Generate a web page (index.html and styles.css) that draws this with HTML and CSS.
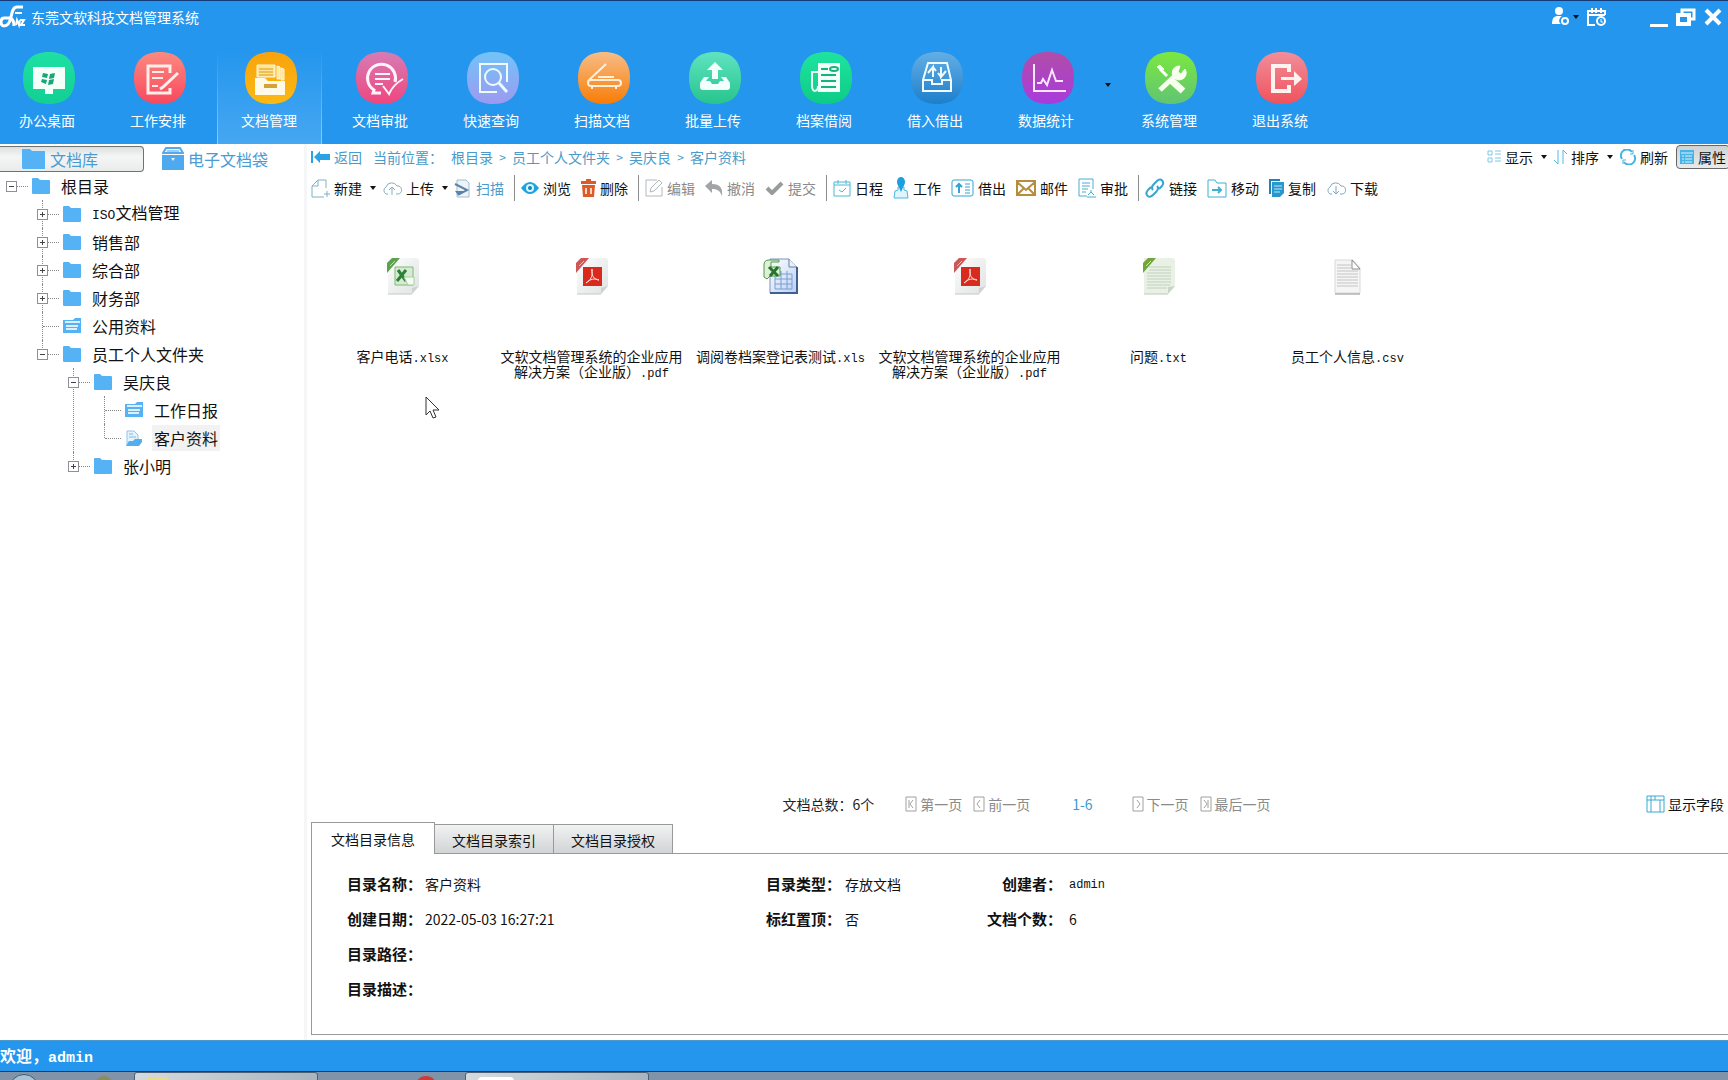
FILE: index.html
```html
<!DOCTYPE html>
<html lang="zh-CN">
<head>
<meta charset="utf-8">
<title>东莞文软科技文档管理系统</title>
<link rel="stylesheet" href="styles.css">
</head>
<body>
<svg class="defs" width="0" height="0" aria-hidden="true">
  <defs>
    <linearGradient id="g-desk" x2="0" y2="1"><stop stop-color="#1fe0a4"/><stop offset="1" stop-color="#12cf93"/></linearGradient>
    <linearGradient id="g-work" x2="0" y2="1"><stop stop-color="#fc8a80"/><stop offset="1" stop-color="#f8485e"/></linearGradient>
    <linearGradient id="g-doc" x2="0" y2="1"><stop stop-color="#f8a30c"/><stop offset="1" stop-color="#fcb813"/></linearGradient>
    <linearGradient id="g-review" x2="0" y2="1"><stop stop-color="#d67cb4"/><stop offset="1" stop-color="#f0457f"/></linearGradient>
    <linearGradient id="g-search" x2="0" y2="1"><stop stop-color="#72c3f8"/><stop offset="1" stop-color="#9c9af0"/></linearGradient>
    <linearGradient id="g-scan" x2="0" y2="1"><stop stop-color="#f7bd86"/><stop offset="1" stop-color="#f87c06"/></linearGradient>
    <linearGradient id="g-upload" x2="0" y2="1"><stop stop-color="#5fe3c0"/><stop offset="1" stop-color="#27c48d"/></linearGradient>
    <linearGradient id="g-read" x2="0" y2="1"><stop stop-color="#1ee4a0"/><stop offset="1" stop-color="#0dcb85"/></linearGradient>
    <linearGradient id="g-lend" x2="0" y2="1"><stop stop-color="#63aee6"/><stop offset="1" stop-color="#1d7fcb"/></linearGradient>
    <linearGradient id="g-stat" x2="0" y2="1"><stop stop-color="#b04da8"/><stop offset="1" stop-color="#a93bdd"/></linearGradient>
    <linearGradient id="g-sys" x2="0" y2="1"><stop stop-color="#7be83f"/><stop offset="1" stop-color="#60c474"/></linearGradient>
    <linearGradient id="g-exit" x2="0" y2="1"><stop stop-color="#f08f9a"/><stop offset="1" stop-color="#f0525c"/></linearGradient>
    <linearGradient id="g-page" x2="1" y2="1"><stop stop-color="#fdfdfd"/><stop offset="1" stop-color="#dfe3e2"/></linearGradient>
    <linearGradient id="g-sheet" x2="1" y2="1"><stop stop-color="#fff"/><stop offset="1" stop-color="#b8d0f4"/></linearGradient>
  </defs>
  <symbol id="tile" viewBox="0 0 52 52"><path d="M26 0C43 0 52 9 52 26S43 52 26 52 0 43 0 26 9 0 26 0Z"/></symbol>
  <symbol id="folder" viewBox="0 0 19 18"><path d="M0 2a1 1 0 0 1 1-1h5l2 2h9a1 1 0 0 1 1 1v12a1 1 0 0 1-1 1H1a1 1 0 0 1-1-1z" fill="#55b2f5"/></symbol>
  <symbol id="folder-doc" viewBox="0 0 19 18"><path d="M0 3h10l2-2h6v15H0z" fill="#55b2f5"/><path d="M2 5h15M3 9h12M3 12h11" stroke="#d8f0ff" stroke-width="2"/></symbol>
  <symbol id="folder-open" viewBox="0 0 19 18"><path d="M2 16V2h7l4 4v5" fill="#e4f3fc" stroke="#8cc5e8"/><path d="M4 5h4M4 8h7" stroke="#7dbde6"/><path d="M1 17l3-5h4l2-2h7v3l-3 4z" fill="#52aeec"/></symbol>
  <symbol id="pdf" viewBox="0 0 36 38"><path d="M3 1h28a3 3 0 0 1 3 3v25l-7 8H3z" fill="url(#g-page)"/><path d="M27 37v-6l7-2z" fill="#cfd2d2"/><path d="M3 37h24" stroke="#c4c8c8"/><path d="M2 11V6l5-5h8L2 16z" fill="#cf5656"/><path d="M5 9l5-5" stroke="#f5b8b8"/><path d="M9 10h19v19H9z" fill="#d92a20"/><path d="M18 12c1 7-1 11-6 14 4-4 9-5 13-3-5 0-8-5-7-11" fill="none" stroke="#fbe0d8"/></symbol>
</svg>

<header class="app-header">
  <div class="titlebar">
    <svg class="logo" width="26" height="24" viewBox="0 0 26 24" fill="none" stroke="#fff" stroke-width="2"><path d="M23 2h-6c-4 0-5 5-6 10s-3 9-7 9-4-8 0-8h5c5 0 5 5 5 8" stroke-width="3"/><path d="M15 8h7M16 20l1-5 2 5 1-5M20 15h4l-3 5h4" stroke-width="2"/></svg>
    <h1>东莞文软科技文档管理系统</h1>
    <div class="window-tools">
      <button class="win user" aria-label="用户设置"><svg width="18" height="20" viewBox="0 0 18 20"><circle cx="7" cy="4" r="4" fill="#fff"/><path d="M0 17c0-6 2-8 6-8h4c-3 2-4 6-1 8z" fill="#fff"/><circle cx="13" cy="14" r="3" fill="none" stroke="#fff" stroke-width="2"/></svg><i class="caret"></i></button>
      <button class="win cal" aria-label="日程"><svg width="19" height="20" viewBox="0 0 19 20" fill="none" stroke="#fff" stroke-width="2"><path d="M8 18H1V4h17v4M1 8h17M5 1v5M9 1v5M14 1v5"/><circle cx="14" cy="14" r="4"/><path d="M14 12v3h2" stroke-width="1"/></svg></button>
      <button class="win" aria-label="最小化"><svg width="18" height="20" viewBox="0 0 18 20"><path d="M0 17h18v3H0z" fill="#fff"/></svg></button>
      <button class="win" aria-label="还原"><svg width="20" height="20" viewBox="0 0 20 20" fill="none" stroke="#fff"><path d="M6 6V3h12v9h-3" stroke-width="3"/><path d="M2 8h11v9H2z" stroke-width="4"/></svg></button>
      <button class="win" aria-label="关闭"><svg width="18" height="20" viewBox="0 0 18 20"><path d="M2 3l14 14M16 3L2 17" stroke="#fff" stroke-width="4"/></svg></button>
    </div>
  </div>
  <nav class="modules">
    <a href="#desk"><svg viewBox="0 0 52 52"><use href="#tile" fill="url(#g-desk)"/><path d="M10 15h32v22H30v5h-8v-5H10z" fill="#f4fffa"/><path d="M20 21l5 1-1 4-5-1zM27 22l5-1-1 5-5 1zM19 27l5 1-1 4-5-2zM26 28l5-1-1 5-5 1z" fill="#17a777"/></svg><span>办公桌面</span></a>
    <a href="#work"><svg viewBox="0 0 52 52"><use href="#tile" fill="url(#g-work)"/><g fill="none" stroke="#ffeeea" stroke-width="3"><path d="M36 21v-7H14v27h22v-5"/><path d="M18 20h12M18 26h11M18 34h6" stroke-width="2"/><path d="M44 21L29 35l-3 2" /></g></svg><span>工作安排</span></a>
    <a href="#docs" class="active" aria-current="page"><svg viewBox="0 0 52 52"><use href="#tile" fill="url(#g-doc)"/><path d="M12 13h18v12H12zM32 14l3 1v12h-3zM36 16l3 1v11h-3z" fill="#ffe59a" stroke="#fff6d6"/><path d="M14 17h14M14 20h14M14 23h14" stroke="#d99a10"/><path d="M10 26h10l3 3h17v14H10z" fill="#fff9e8"/><path d="M19 32h13v4H19z" fill="#d3a23a"/></svg><span>文档管理</span></a>
    <a href="#review"><svg viewBox="0 0 52 52"><use href="#tile" fill="url(#g-review)"/><g fill="none" stroke="#fff2f8" stroke-width="3"><path d="M25 41H17l1-3A14 14 0 1 1 39 30"/><path d="M19 22h15M19 27h15M19 32h8" stroke-width="2"/><path d="M27 34l6 8c3-7 7-11 14-15" stroke-width="2"/></g></svg><span>文档审批</span></a>
    <a href="#search"><svg viewBox="0 0 52 52"><use href="#tile" fill="url(#g-search)"/><g fill="none" stroke="#effaff" stroke-width="2"><path d="M30 40H13V12h27v18"/><circle cx="26" cy="25" r="8"/><path d="M32 31l8 9" stroke-width="3"/></g></svg><span>快速查询</span></a>
    <a href="#scan"><svg viewBox="0 0 52 52"><use href="#tile" fill="url(#g-scan)"/><g fill="none" stroke="#ffeeda" stroke-width="2"><path d="M28 12L10 29"/><rect x="10" y="28" width="33" height="6" rx="3"/><path d="M20 25h16M14 34v3M38 34v3"/></g></svg><span>扫描文档</span></a>
    <a href="#upload"><svg viewBox="0 0 52 52"><use href="#tile" fill="url(#g-upload)"/><path d="M26 10l8 8h-5v9h-6v-9h-5z" fill="#f2fffb"/><path d="M15 25h5l-3 4h4l2 3h6l2-3h4l-3-4h5l4 6v4a3 3 0 0 1-3 3H14a3 3 0 0 1-3-3v-4z" fill="#f2fffb"/></svg><span>批量上传</span></a>
    <a href="#read"><svg viewBox="0 0 52 52"><use href="#tile" fill="url(#g-read)"/><path d="M18 11h22v29H18z" fill="#f3fffa"/><path d="M18 20h-6v14c0 7 6 6 6 0" fill="none" stroke="#e8fff6" stroke-width="2"/><path d="M21 17h7M21 23h15M21 29h15M21 35h15" stroke="#16b47c" stroke-width="2"/><ellipse cx="34" cy="17" rx="4" ry="2" fill="none" stroke="#16b47c" stroke-width="2"/></svg><span>档案借阅</span></a>
    <a href="#lend"><svg viewBox="0 0 52 52"><use href="#tile" fill="url(#g-lend)"/><g fill="none" stroke="#f0fbff" stroke-width="2"><path d="M17 11h19l4 17v11H12V28z"/><path d="M12 28h9v4h10v-4h9M22 25V15l-5 6M22 15l3 4M30 15v10l5-6M30 25l-3-4"/></g></svg><span>借入借出</span></a>
    <a href="#stat"><svg viewBox="0 0 52 52"><use href="#tile" fill="url(#g-stat)"/><g fill="none" stroke="#fbe6ff" stroke-width="2"><path d="M12 12v27h32"/><path d="M15 31h4l2-4 4 6 5-15 4 11h7"/></g></svg><span>数据统计</span></a>
    <button class="more" aria-label="更多"><i class="caret"></i></button>
    <a href="#sys"><svg viewBox="0 0 52 52"><use href="#tile" fill="url(#g-sys)"/><g stroke="#f7ffee" fill="none"><path d="M15 17l7 7" stroke-width="3"/><path d="M27 29l11 10" stroke-width="7"/><path d="M15 38l17-16" stroke-width="5"/><path d="M40 17a7 7 0 1 1-5-3l-2 6 3 2z" fill="#f7ffee"/><path d="M12 15l3-2 4 4-2 2z" fill="#f7ffee"/></g></svg><span>系统管理</span></a>
    <a href="#exit"><svg viewBox="0 0 52 52"><use href="#tile" fill="url(#g-exit)"/><path d="M33 20v-6H17v25h16v-6" fill="none" stroke="#fff3f0" stroke-width="4"/><path d="M25 25h13v-6l8 8-8 7v-6H25z" fill="#fff3f0"/></svg><span>退出系统</span></a>
  </nav>
</header>

<div class="workspace">
  <aside class="sidebar">
    <div class="lib-tabs">
      <button class="lib-tab current"><svg width="24" height="22" viewBox="0 0 24 22"><path d="M0 1h8l2 2h13v18H1L0 20z" fill="#55b2f5"/></svg>文档库</button>
      <button class="lib-tab"><svg width="22" height="24" viewBox="0 0 22 24"><path d="M4 1h14l3 5H1z" fill="#e3f4ff" stroke="#55a8ec" stroke-width="2"/><path d="M5 4h12" stroke="#55a8ec"/><path d="M0 8h22v15H0z" fill="#4fa9ee"/><path d="M9 11h4l-2 3z" fill="#e3f4ff"/></svg>电子文档袋</button>
    </div>
    <ul class="tree root">
      <li><div class="row"><button class="exp" aria-label="收起"></button><i class="dash"></i><svg class="ti"><use href="#folder"/></svg><a href="#n0">根目录</a></div>
        <ul class="tree">
          <li><div class="row"><button class="exp plus" aria-label="展开"></button><i class="dash"></i><svg class="ti"><use href="#folder"/></svg><a href="#n1"><span class="mono">ISO</span>文档管理</a></div></li>
          <li><div class="row"><button class="exp plus" aria-label="展开"></button><i class="dash"></i><svg class="ti"><use href="#folder"/></svg><a href="#n2">销售部</a></div></li>
          <li><div class="row"><button class="exp plus" aria-label="展开"></button><i class="dash"></i><svg class="ti"><use href="#folder"/></svg><a href="#n3">综合部</a></div></li>
          <li><div class="row"><button class="exp plus" aria-label="展开"></button><i class="dash"></i><svg class="ti"><use href="#folder"/></svg><a href="#n4">财务部</a></div></li>
          <li><div class="row leaf"><i class="dash"></i><svg class="ti"><use href="#folder-doc"/></svg><a href="#n5">公用资料</a></div></li>
          <li><div class="row"><button class="exp" aria-label="收起"></button><i class="dash"></i><svg class="ti"><use href="#folder"/></svg><a href="#n6">员工个人文件夹</a></div>
            <ul class="tree">
              <li><div class="row"><button class="exp" aria-label="收起"></button><i class="dash"></i><svg class="ti"><use href="#folder"/></svg><a href="#n7">吴庆良</a></div>
                <ul class="tree">
                  <li><div class="row leaf"><i class="dash"></i><svg class="ti"><use href="#folder-doc"/></svg><a href="#n8">工作日报</a></div></li>
                  <li><div class="row leaf"><i class="dash"></i><svg class="ti"><use href="#folder-open"/></svg><a href="#n9" class="selected">客户资料</a></div></li>
                </ul>
              </li>
              <li><div class="row"><button class="exp plus" aria-label="展开"></button><i class="dash"></i><svg class="ti"><use href="#folder"/></svg><a href="#n10">张小明</a></div></li>
            </ul>
          </li>
        </ul>
      </li>
    </ul>
  </aside>

  <main class="content">
    <div class="pathbar">
      <nav class="crumbs">
        <a href="#back" class="back"><svg width="20" height="14" viewBox="0 0 20 14" fill="#2aa3e4"><path d="M0 1h2v12H0zM3 7l6-6v3h10v6H9v3z"/></svg>返回</a>
        <span class="where">当前位置：</span>
        <a href="#c0">根目录</a><i>&gt;</i><a href="#c1">员工个人文件夹</a><i>&gt;</i><a href="#c2">吴庆良</a><i>&gt;</i><a href="#c3">客户资料</a>
      </nav>
      <div class="view-tools">
        <button class="tool"><svg width="14" height="14" viewBox="0 0 14 14" fill="none" stroke="#7cc9e4"><path d="M1 1h4v4H1zM1 8h4v4H1zM8 1h6M8 4h6M8 8h6M8 11h6"/></svg>显示<i class="caret"></i></button>
        <button class="tool"><svg width="13" height="16" viewBox="0 0 13 16" fill="none" stroke="#58b8e0"><path d="M4 1v14L0 11M9 15V1l4 4"/></svg>排序<i class="caret"></i></button>
        <button class="tool"><svg width="16" height="16" viewBox="0 0 16 16" fill="none" stroke="#45b3e0" stroke-width="2"><path d="M2 10A6 6 0 0 1 12 3M14 6A6 6 0 0 1 4 13"/><path d="M10 5h3V1M6 11H3v4" stroke-width="1"/></svg>刷新</button>
        <button class="tool pressed"><svg width="14" height="14" viewBox="0 0 14 14"><path d="M0 0h14v14H0z" fill="#48b4e6"/><path d="M1 3h12M2 6h2M5 6h7M2 9h2M5 9h7M2 12h2M5 12h7" stroke="#d9f2ff"/></svg>属性</button>
      </div>
    </div>

    <div class="toolbar">
      <button class="tool"><svg width="19" height="19" viewBox="0 0 19 19" fill="none" stroke="#7fb2c8"><path d="M15 9V1H7L1 7v11h12M7 1v6H1"/><path d="M16 12v6M13 15h6"/></svg>新建<i class="caret"></i></button>
      <button class="tool"><svg width="20" height="16" viewBox="0 0 20 16" fill="none" stroke="#84adc0"><path d="M6 14H4a4 4 0 0 1 0-7 6 6 0 0 1 11-1 4 4 0 0 1 1 8h-2M10 15V8M7 10l3-3 3 3"/></svg>上传<i class="caret"></i></button>
      <button class="tool blue"><svg width="18" height="19" viewBox="0 0 18 19"><path d="M3 1h9l3 3v14H3z" fill="#edf4f8" stroke="#a5bdca"/><path d="M1 5l12 6-9 5" fill="none" stroke="#5c83aa" stroke-width="2"/><path d="M1 12l12 0-9 4z" fill="#5c83aa"/></svg>扫描</button>
      <i class="sep"></i>
      <button class="tool"><svg width="18" height="12" viewBox="0 0 18 12"><path d="M0 6q9-12 18 0-9 12-18 0" fill="#1ba4de"/><circle cx="9" cy="6" r="4" fill="#dcf5ff"/><circle cx="9" cy="6" r="2" fill="#1a83b5"/></svg>浏览</button>
      <button class="tool"><svg width="15" height="18" viewBox="0 0 15 18"><path d="M5 0h5v2h5v3H0V2h5zM1 6h13l-1 12H2z" fill="#dd5b26"/><path d="M5 9v6M10 9v6" stroke="#ffd6c4" stroke-width="2"/></svg>删除</button>
      <i class="sep"></i>
      <button class="tool off" disabled><svg width="18" height="18" viewBox="0 0 18 18" fill="none" stroke="#b3b7b9"><path d="M17 8v9H1V1h11M5 13l1-4 8-8 3 3-8 8z"/></svg>编辑</button>
      <button class="tool off" disabled><svg width="18" height="16" viewBox="0 0 18 16"><path d="M0 6l7-6v4c8 0 11 4 10 12-2-5-4-7-10-7v4z" fill="#a2a4a5"/></svg>撤消</button>
      <button class="tool off" disabled><svg width="19" height="14" viewBox="0 0 19 14"><path d="M2 7l5 5L17 2" fill="none" stroke="#999c9d" stroke-width="4"/></svg>提交</button>
      <i class="sep"></i>
      <button class="tool"><svg width="18" height="18" viewBox="0 0 18 18" fill="none" stroke="#4ab8d4"><path d="M1 3h16v14H1zM1 6h16M5 1v4M13 1v4M6 11l3 2 4-4"/></svg>日程</button>
      <button class="tool"><svg width="16" height="22" viewBox="0 0 16 22"><path d="M5 10h6v3l3 1 1 7H1l1-7 3-1z" fill="#dff4fc" stroke="#4fb5e2"/><ellipse cx="8" cy="5" rx="4" ry="5" fill="#1b9fe0"/><path d="M5 8h6l-3 7z" fill="#1b9fe0"/></svg>工作</button>
      <button class="tool"><svg width="23" height="18" viewBox="0 0 23 18" fill="none" stroke="#32a3d4"><rect x="1" y="1" width="21" height="16" rx="2"/><path d="M8 14V5M5 8l3-3 3 3" stroke-width="2"/><path d="M14 5h5M14 8h5M14 11h5M14 14h5"/></svg>借出</button>
      <button class="tool"><svg width="20" height="16" viewBox="0 0 20 16" fill="none" stroke="#b68d3c" stroke-width="2"><path d="M1 1h18v14H1zM1 2l9 8 9-8M1 15l7-7M19 15l-7-7"/></svg>邮件</button>
      <button class="tool"><svg width="18" height="20" viewBox="0 0 18 20" fill="none" stroke="#4aadd0"><path d="M9 18H1V1h14v10M4 5h8M4 8h8M4 11h6M4 14h4"/><path d="M13 12v3M10 17l3-3 3 3M9 19h9"/></svg>审批</button>
      <i class="sep"></i>
      <button class="tool"><svg width="20" height="20" viewBox="0 0 20 20" fill="none" stroke="#34a5cf" stroke-width="2"><path d="M8 12c-2-2-1-4 1-6l3-3c4-4 8 1 5 5l-3 3M12 8c2 2 1 4-1 6l-3 3c-4 4-9 0-5-5l3-3"/></svg>链接</button>
      <button class="tool"><svg width="20" height="19" viewBox="0 0 20 19" fill="none" stroke="#3fb0d3"><path d="M1 1h7l2 3h9v14H1z"/><path d="M5 11h9M11 8l3 3-3 3" stroke-width="2"/></svg>移动</button>
      <button class="tool"><svg width="15" height="18" viewBox="0 0 15 18"><path d="M0 0h11v2H2v13H0z" fill="#2183b4"/><path d="M3 3h12v11l-4 4H3z" fill="#2698cd"/><path d="M5 7h8M5 10h8M5 13h6" stroke="#bfe6f6"/></svg>复制</button>
      <button class="tool"><svg width="20" height="16" viewBox="0 0 20 16" fill="none" stroke="#7fa9c2"><path d="M6 14H4a4 4 0 0 1 0-7 6 6 0 0 1 11-1 4 4 0 0 1 1 8h-2M10 6v8M7 11l3 3 3-3"/></svg>下载</button>
    </div>

    <ul class="files">
      <li><a href="#f1"><svg viewBox="0 0 36 38"><path d="M3 1h28a3 3 0 0 1 3 3v25l-7 8H3z" fill="url(#g-page)"/><path d="M27 37v-6l7-2z" fill="#cfd2d2"/><path d="M3 37h24" stroke="#c4c8c8"/><path d="M2 11V6l5-5h8L2 16z" fill="#5da04e"/><path d="M5 9l5-5" stroke="#bfe0b4"/><path d="M10 10h18v18H10z" fill="#d6ecd2" stroke="#7fb878"/><path d="M13 13l8 11M21 13l-9 11" stroke="#2e8236" stroke-width="3"/><path d="M19 20h10v8h-6z" fill="#f6fcf4" stroke="#a5cf9d"/></svg><span>客户电话<span class="mono">.xlsx</span></span></a></li>
      <li><a href="#f2"><svg><use href="#pdf"/></svg><span>文软文档管理系统的企业应用解决方案（企业版）<span class="mono">.pdf</span></span></a></li>
      <li><a href="#f3"><svg viewBox="0 0 36 38"><path d="M8 2h18l8 8v26H7V2z" fill="url(#g-sheet)" stroke="#7f93b8"/><path d="M26 2v8h8" fill="#e8f0fb" stroke="#6d7f9f"/><path d="M34 10v26H7" fill="none" stroke="#42608f" stroke-width="2"/><path d="M12 17h17v15H12zM12 22h17M12 27h17M18 14v18M24 14v18" fill="none" stroke="#7d9cd3"/><path d="M1 20V8q0-5 5-5h10v2H8v5h9v9H7l-3 3z" fill="#dff0d8" stroke="#519a4a"/><path d="M6 10l9 9M15 10l-8 9" stroke="#26752b" stroke-width="3"/></svg><span>调阅卷档案登记表测试<span class="mono">.xls</span></span></a></li>
      <li><a href="#f4"><svg><use href="#pdf"/></svg><span>文软文档管理系统的企业应用解决方案（企业版）<span class="mono">.pdf</span></span></a></li>
      <li><a href="#f5"><svg viewBox="0 0 36 38"><path d="M3 1h28a3 3 0 0 1 3 3v25l-7 8H3z" fill="#e9f1e5"/><path d="M27 37v-7l7-1z" fill="#cad4c7"/><path d="M3 37h24" stroke="#c0c8bd"/><path d="M8 10h22M8 13h22M6 16h24M6 19h24M6 22h24M6 25h24M6 28h23M6 31h20" stroke="#c3cfbf"/><path d="M2 11V6l5-5h8L2 16z" fill="#70a63b"/><path d="M5 9l5-5" stroke="#cfe5b0"/></svg><span>问题<span class="mono">.txt</span></span></a></li>
      <li><a href="#f6"><svg viewBox="0 0 36 38"><path d="M5 3h18l7 8v25H5z" fill="#f5f5f5" stroke="#d9d9d9"/><path d="M22 3v9h8z" fill="#fff" stroke="#8c8c8c"/><path d="M7 8h14M7 11h14M7 14h21M7 17h21M7 20h21M7 23h21M7 26h21M7 29h21" stroke="#c3c3c3"/><path d="M5 37h25" stroke="#8f8f8f"/></svg><span>员工个人信息<span class="mono">.csv</span></span></a></li>
    </ul>

    <div class="pager">
      <div class="pages">
        <span class="total">文档总数：6个</span>
        <button><svg viewBox="0 0 12 16"><path d="M1 1h10v14H1zM4 4v8M8 4L5 8l3 4"/></svg>第一页</button>
        <button><svg viewBox="0 0 12 16"><path d="M1 1h10v14H1zM7 4L4 8l3 4"/></svg>前一页</button>
        <span class="range">1-6</span>
        <button><svg viewBox="0 0 12 16"><path d="M1 1h10v14H1zM5 4l3 4-3 4"/></svg>下一页</button>
        <button><svg viewBox="0 0 12 16"><path d="M1 1h10v14H1zM4 4l3 4-3 4M8 4v8"/></svg>最后一页</button>
      </div>
      <button class="fields"><svg width="19" height="18" viewBox="0 0 19 18" fill="none" stroke="#38a9d6"><path d="M1 1h17v16H1zM1 5h17M5 1v16M14 5v12M9 1v4"/></svg>显示字段</button>
    </div>

    <section class="details">
      <div class="tabs" role="tablist">
        <button role="tab" aria-selected="true">文档目录信息</button>
        <button role="tab" aria-selected="false">文档目录索引</button>
        <button role="tab" aria-selected="false">文档目录授权</button>
      </div>
      <dl class="panel">
        <dt>目录名称：</dt><dd>客户资料</dd><dt>目录类型：</dt><dd>存放文档</dd><dt class="end">创建者：</dt><dd><span class="mono">admin</span></dd>
        <dt>创建日期：</dt><dd>2022-05-03 16:27:21</dd><dt>标红置顶：</dt><dd>否</dd><dt class="end">文档个数：</dt><dd>6</dd>
        <dt>目录路径：</dt><dd class="wide"></dd>
        <dt>目录描述：</dt><dd class="wide"></dd>
      </dl>
    </section>
    <svg class="cursor" width="16" height="24" viewBox="0 0 16 24"><path d="M1 1v18l4-4 3 7 3-1-3-7h6z" fill="#fff" stroke="#333"/></svg>
  </main>
</div>

<footer class="status">欢迎，<span class="mono">admin</span></footer>
<div class="taskbar" aria-hidden="true">
  <i class="orb"></i><i class="quick"></i>
  <i class="task"><i class="chip yellow"></i></i>
  <i class="dot"></i>
  <i class="task"><i class="chip white"></i></i>
</div>
</body>
</html>
```
FILE: styles.css
```css
* { box-sizing: border-box; }

body {
  margin: 0;
  height: 100vh;
  display: flex;
  flex-direction: column;
  overflow: hidden;
  background: #fff;
  color: #111;
  font: 14px/20px "Noto Sans CJK SC", sans-serif;
}

button {
  font: inherit;
  color: inherit;
  background: none;
  border: 0;
  padding: 0;
  white-space: nowrap;
}

a { color: inherit; text-decoration: none; }
ul, dl, dd { margin: 0; padding: 0; list-style: none; }
i { font-style: normal; }
svg { flex: none; display: block; }
.defs { position: absolute; }
.mono { font-family: "Liberation Mono", monospace; }

.caret {
  flex: none;
  width: 0;
  height: 0;
  border: 3px solid transparent;
  border-top: 4px solid #111;
  border-bottom: 0;
}

/* header */
.app-header {
  flex: none;
  background: #2496ed;
  border-top: 1px solid #123a78;
  color: #fff;
}

.titlebar { display: flex; align-items: center; height: 31px; }
.titlebar h1 { margin: 0 0 0 5px; font-size: 14px; font-weight: 400; line-height: 20px; }
.window-tools { display: flex; gap: 8px; margin-left: auto; padding-right: 6px; }
.win { display: flex; align-items: center; gap: 3px; }
.cal { margin-right: 36px; }

.modules { display: flex; gap: 6px; margin: 18px 0 0 -5px; }
.modules a {
  width: 105px;
  height: 94px;
  padding: 2px 1px 12px 0;
  display: flex;
  flex-direction: column;
  align-items: center;
  gap: 6px;
  border: solid transparent;
  border-width: 0 1px;
}
.modules a svg { width: 52px; height: 52px; margin-left: 3px; }
.modules a.active {
  background: linear-gradient(#2496ed, #46a7f2);
  border-image: linear-gradient(#2496ed, #8fccf8) 1;
  border-width: 0 1px;
}
.more { width: 12px; margin: 0 -3px; }

/* workspace */
.workspace { flex: 1; min-height: 0; display: flex; }
.sidebar { flex: none; width: 307px; padding-top: 2px; border-right: 3px solid #f5f6f7; }

.lib-tabs { display: flex; gap: 18px; }
.lib-tab {
  height: 26px;
  display: flex;
  align-items: center;
  gap: 4px;
  font-size: 16px;
  color: #4a9bd4;
}
.lib-tab.current {
  width: 144px;
  padding-left: 22px;
  border: 1px solid #6d7272;
  border-left: 0;
  border-radius: 0 4px 4px 0;
  background: linear-gradient(#dde0df, #f4f6f5 40%, #e9eceb);
}

.tree { padding-left: 31px; font-size: 16px; }
.tree.root { padding-left: 0; }
.tree li { position: relative; }
.tree .tree > li::before {
  content: "";
  position: absolute;
  left: 11px;
  top: 0;
  bottom: 0;
  border-left: 1px dotted #888;
}
.tree .tree > li:last-child::before { bottom: auto; height: 14px; }
.row { display: flex; align-items: center; height: 28px; padding-left: 6px; }
.row.leaf { padding-left: 12px; }
.exp {
  position: relative;
  width: 11px;
  height: 11px;
  border: 1px solid #8f8f98;
  background: linear-gradient(#444, #444) center / 5px 1px no-repeat #fff;
}
.exp.plus {
  background:
    linear-gradient(#444, #444) center / 5px 1px no-repeat,
    linear-gradient(#444, #444) center / 1px 5px no-repeat #fff;
}
.dash { width: 11px; border-top: 1px dotted #888; margin-right: 4px; }
.leaf .dash { width: 16px; }
.ti { width: 19px; height: 18px; }
.row a { margin-left: 8px; padding: 0 2px; line-height: 26px; }
.row .selected { background: #f2f2f2; }
.tree .mono { font-size: 13px; }

.content { flex: 1; min-width: 0; display: flex; flex-direction: column; padding-left: 4px; overflow: hidden; }

.pathbar { display: flex; justify-content: space-between; height: 26px; }
.crumbs { display: flex; align-items: center; gap: 6px; color: #4a9bc9; }
.crumbs i { width: 7px; text-align: center; font-size: 12px; }
.back { display: flex; align-items: center; gap: 3px; }
.where { margin: 0 2px 0 5px; }

.tool { display: flex; align-items: center; gap: 4px; }
.tool .caret { margin: 0 -4px 0 4px; }
.view-tools { display: flex; align-items: center; gap: 11px; margin-right: -2px; }
.pressed {
  height: 24px;
  margin-left: -3px;
  padding: 0 3px;
  border: 1px solid #666;
  border-radius: 4px;
  background: linear-gradient(#cfd2d3, #e9ebeb);
}

.toolbar { display: flex; align-items: center; gap: 10px; height: 36px; }
.sep { flex: none; width: 1px; height: 26px; margin-right: -4px; background: #8c8c8c; }
.blue { color: #4a9bc9; }
.off { color: #8a8a8a; }

.files {
  flex: 1;
  display: grid;
  grid-template-columns: repeat(auto-fill, 189px);
  align-content: start;
  padding: 51px 0 0;
  margin-left: -3px;
}
.files a { display: flex; flex-direction: column; align-items: center; gap: 54px; }
.files svg { width: 36px; height: 38px; }
.files a > span { width: 186px; padding: 0 2px; text-align: center; line-height: 15px; }
.files .mono { font-size: 12px; line-height: 12px; }

.pager {
  display: flex;
  align-items: center;
  height: 34px;
  padding-right: 4px;
  margin-bottom: 1px;
}
.pages { flex: 1; display: flex; justify-content: center; gap: 11px; padding-left: 96px; color: #8a8a8a; }
.pages button, .fields { display: flex; align-items: center; gap: 3px; }
.pages svg { width: 12px; height: 16px; fill: none; stroke: #a0a0a0; }
.total { margin-right: 20px; color: #222; }
.range { margin: 0 28px 0 31px; color: #3a9bd5; }

/* directory details */
.details { display: flex; flex-direction: column; height: 213px; margin-bottom: 5px; }
.tabs { display: flex; align-items: flex-end; }
.tabs button {
  height: 29px;
  padding: 2px 17px 0;
  border: 1px solid #999;
  border-width: 1px 1px 0 0;
  background: linear-gradient(#f1f2f2, #d1d4d5);
}
.tabs button[aria-selected="true"] {
  position: relative;
  height: 32px;
  margin-bottom: -1px;
  padding: 0 19px;
  border-left-width: 1px;
  background: #fff;
}
.panel {
  flex: 1;
  display: grid;
  grid-template-columns: 78px 341px 79px 137px 87px 1fr;
  grid-auto-rows: 35px;
  align-items: center;
  padding: 12px 0 0 35px;
  margin-right: -2px;
  border: 1px solid #999;
}
.panel dt { font-size: 15px; font-weight: 700; }
.panel .end { padding-right: 7px; text-align: right; }
.panel .wide { grid-column: span 5; }
.panel .mono { font-size: 12px; }

.cursor { position: absolute; left: 425px; top: 396px; }

/* status line and desktop strip */
.status {
  flex: none;
  height: 31px;
  background: #2496ed;
  border-top: 1px solid #4a9ad0;
  color: #fff;
  font-size: 16px;
  font-weight: 700;
  line-height: 28px;
}
.status .mono { font-size: 15px; }
.taskbar {
  flex: none;
  height: 9px;
  display: flex;
  overflow: hidden;
  border-top: 1px solid #1c3c5c;
  background: #8093a8;
}
.orb { flex: none; width: 30px; height: 30px; margin: 2px 0 0 9px; border: 1px solid #3b5f78; border-radius: 50%; background: #a9c4d6; }
.quick { flex: none; width: 18px; height: 18px; margin: 4px 21px 0 56px; border-radius: 50%; background: #8a8c5c; }
.task { flex: none; width: 184px; height: 30px; border: 1px solid #4d5f70; border-radius: 3px; background: linear-gradient(90deg, #d5dade, #a9b4be); }
.chip { display: block; height: 16px; margin: 4px 0 0 12px; border-radius: 4px; }
.yellow { width: 22px; background: #e6dc90; }
.white { width: 36px; background: #fff; }
.dot { flex: none; width: 22px; height: 22px; margin: 4px 28px 0 97px; border-radius: 50%; background: #cf3b35; }
```
